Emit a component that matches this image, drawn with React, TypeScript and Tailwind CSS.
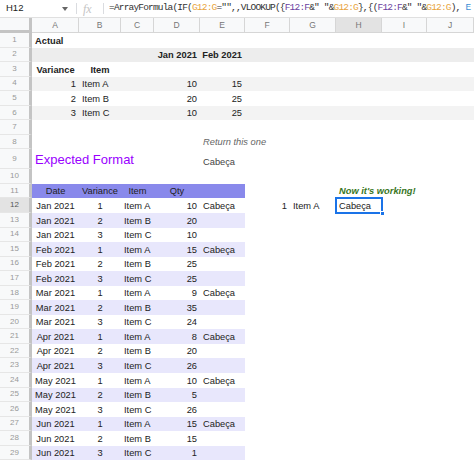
import React from 'react';

type Align = 'l' | 'r' | 'c';
type Cell = { t: string; a?: Align; c?: string } | null;
type RowSpec = {
  n: number;
  cells: Cell[];
  fill?: 'gray' | 'head' | 'band';
  tall?: boolean;
  sel?: boolean;
};

const GRID = 'grid grid-cols-[32px_47px_42px_33px_46px_45px_45px_46px_46px_45px_47px]';
const LETTERS = ['A', 'B', 'C', 'D', 'E', 'F', 'G', 'H', 'I', 'J'];

const blank = (): Cell[] => Array.from({ length: 10 }, () => null);

function row(n: number, set: Record<number, Cell>, extra: Partial<RowSpec> = {}): RowSpec {
  const cells = blank();
  Object.entries(set).forEach(([k, v]) => (cells[Number(k)] = v));
  return { n, cells, ...extra };
}

const months = ['Jan', 'Feb', 'Mar', 'Apr', 'May', 'Jun'];
const qty = [
  [10, 20, 10],
  [15, 25, 25],
  [9, 35, 24],
  [8, 20, 26],
  [10, 5, 26],
  [15, 15, 1],
];

const rows: RowSpec[] = [
  row(1, { 0: { t: 'Actual', c: 'font-bold' } }),
  row(
    2,
    {
      3: { t: 'Jan 2021', a: 'r', c: 'font-bold' },
      4: { t: 'Feb 2021', a: 'r', c: 'font-bold' },
    },
    { fill: 'gray' }
  ),
  row(3, {
    0: { t: 'Variance', a: 'c', c: 'font-bold' },
    1: { t: 'Item', a: 'c', c: 'font-bold' },
  }),
  row(4, { 0: { t: '1', a: 'r' }, 1: { t: 'Item A' }, 3: { t: '10', a: 'r' }, 4: { t: '15', a: 'r' } }, { fill: 'gray' }),
  row(5, { 0: { t: '2', a: 'r' }, 1: { t: 'Item B' }, 3: { t: '20', a: 'r' }, 4: { t: '25', a: 'r' } }),
  row(6, { 0: { t: '3', a: 'r' }, 1: { t: 'Item C' }, 3: { t: '10', a: 'r' }, 4: { t: '25', a: 'r' } }, { fill: 'gray' }),
  row(7, {}),
  row(8, { 4: { t: 'Return this one', c: 'italic text-[#666]' } }),
  row(
    9,
    {
      0: { t: 'Expected Format', c: 'text-[13px] text-[#9900ff] leading-[16px]' },
      4: { t: 'Cabeça', c: 'text-[#444]' },
    },
    { tall: true }
  ),
  row(10, {}),
  row(
    11,
    {
      0: { t: 'Date', a: 'c' },
      1: { t: 'Variance', a: 'c' },
      2: { t: 'Item', a: 'c' },
      3: { t: 'Qty', a: 'c' },
      7: { t: "Now it's working!", c: 'font-bold italic text-[#38761d]' },
    },
    { fill: 'head' }
  ),
];

months.forEach((m, mi) => {
  ['A', 'B', 'C'].forEach((it, ii) => {
    const n = 12 + mi * 3 + ii;
    const set: Record<number, Cell> = {
      0: { t: `${m} 2021`, a: 'c' },
      1: { t: String(ii + 1), a: 'c' },
      2: { t: `Item ${it}` },
      3: { t: String(qty[mi][ii]), a: 'r' },
    };
    if (ii === 0) set[4] = { t: 'Cabeça' };
    if (n === 12) {
      set[5] = { t: '1', a: 'r' };
      set[6] = { t: 'Item A' };
      set[7] = { t: 'Cabeça' };
    }
    rows.push(row(n, set, { fill: n % 2 === 1 ? 'band' : undefined, sel: n === 12 }));
  });
});

function cellBg(r: RowSpec, i: number) {
  if (r.fill === 'gray') return r.n === 2 ? 'bg-[#ededed]' : 'bg-[#f3f3f3]';
  if (r.fill === 'head' && i < 5) return 'bg-[#8989eb]';
  if (r.fill === 'band' && i < 5) return 'bg-[#e8e7fc]';
  return '';
}

function FormulaBar() {
  return (
    <div className="flex h-[18px] items-center border-b border-[#e0e0e0] bg-white">
      <div className="flex w-[76px] items-center pl-[6px] pr-[8px]">
        <span className="text-[9.5px] text-[#222]">H12</span>
        <svg className="ml-auto" width="6" height="4" viewBox="0 0 6 4">
          <path d="M0 0h6L3 4z" fill="#666" />
        </svg>
      </div>
      <div className="h-[11px] w-px bg-[#dadce0]" />
      <span className="ml-[6px] w-[20px] font-['Liberation_Serif',serif] text-[12px] italic leading-none text-[#c4c4c4]">
        fx
      </span>
      <div className="h-[11px] w-px bg-[#dadce0]" />
      <div className="ml-[5px] whitespace-nowrap font-['Liberation_Mono',monospace] text-[9.5px] tracking-[-0.82px] text-[#333]">
        =ArrayFormula(IF(<span className="text-[#e8a33a]">G12:G</span>="",,VLOOKUP({'{'}
        <span className="text-[#6a3fa0]">F12:F</span>&amp;" "&amp;<span className="text-[#e8a33a]">G12:G</span>
        {'}'},{'{'}(<span className="text-[#6a3fa0]">F12:F</span>&amp;" "&amp;
        <span className="text-[#e8a33a]">G12:G</span>), <span className="text-[#3d8fd6]">E</span>
      </div>
    </div>
  );
}

function ColumnHeader() {
  return (
    <div className={`${GRID} h-[15px]`}>
      <div className="border-b-[3px] border-r-[3px] border-[#c4c4c4] bg-[#f8f9fa]" />
      {LETTERS.map((l) => (
        <div
          key={l}
          className={`flex items-center justify-center border-b border-r border-[#d6d6d6] text-[8.5px] text-[#777] ${
            l === 'H' ? 'bg-[#e3e3e3]' : 'bg-[#f8f9fa]'
          }`}
        >
          {l}
        </div>
      ))}
    </div>
  );
}

function SheetRow({ r }: { r: RowSpec }) {
  return (
    <div className={`${GRID} ${r.tall ? 'h-[20px]' : 'h-[14.55px]'}`}>
      <div
        className={`flex items-center justify-center border-b border-r-[3px] border-b-[#e6e6e6] border-r-[#c4c4c4] text-[8px] ${
          r.sel ? 'bg-[#e3e3e3] text-[#555]' : 'bg-[#f8f9fa] text-[#999]'
        }`}
      >
        {r.n}
      </div>
      {r.cells.map((c, i) => (
        <div
          key={i}
          className={`relative flex items-end whitespace-nowrap px-[3px] pb-[1px] ${cellBg(r, i)} ${
            c?.a === 'r' ? 'justify-end' : c?.a === 'c' ? 'justify-center' : 'justify-start'
          }`}
        >
          {c && <span className={`leading-[11px] ${c.c ?? ''}`}>{c.t}</span>}
          {r.sel && i === 7 && (
            <div className="absolute inset-[-1px] border-2 border-[#1a73e8]">
              <div className="absolute bottom-[-4px] right-[-4px] h-[5px] w-[5px] border border-white bg-[#1a73e8]" />
            </div>
          )}
        </div>
      ))}
    </div>
  );
}

export default function App() {
  return (
    <div className="h-[462px] w-[474px] overflow-hidden bg-white font-['Liberation_Sans',Arial,sans-serif] text-[9.3px] text-[#222]">
      <FormulaBar />
      <ColumnHeader />
      {rows.map((r) => (
        <SheetRow key={r.n} r={r} />
      ))}
    </div>
  );
}
